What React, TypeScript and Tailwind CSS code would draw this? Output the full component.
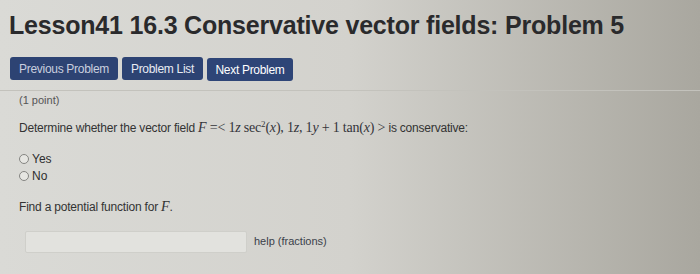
import React from "react";

const sans = { fontFamily: '"Liberation Sans", Arial, sans-serif' };
const serif = { fontFamily: '"Liberation Serif", "Times New Roman", serif' };

function Nav() {
  return (
    <div className="flex gap-[4px] pl-[10px] pt-[18px]">
      <button className="h-[23px] w-[108px] rounded-[3px] bg-[#2d4373] text-[12px] tracking-[-0.3px] text-[#c9cfdf]">
        Previous Problem
      </button>
      <button className="h-[23px] w-[81px] rounded-[3px] bg-[#2d4373] text-[12px] tracking-[-0.3px] text-[#e8ebf2]">
        Problem List
      </button>
      <button className="mt-[1px] h-[23px] w-[86px] rounded-[3px] bg-[#2e4577] text-[12px] tracking-[-0.3px] text-white">
        Next Problem
      </button>
    </div>
  );
}

function Radio({ label }: { label: string }) {
  return (
    <label className="flex items-center gap-[3px] text-[12px] leading-[17px] text-[#2e2e2e]">
      <span className="inline-block h-[10px] w-[10px] rounded-full border border-[#858582] bg-[#e6e6e2]" />
      {label}
    </label>
  );
}

export default function App() {
  return (
    <div
      className="relative h-[274px] w-[700px] overflow-hidden bg-linear-to-r from-[#dadad6] via-[#d3d2cd] to-[#a9a79f]"
      style={sans}
    >
      <h1 className="pl-[9px] pt-[11px] text-[25px] font-bold leading-[28px] tracking-[-0.2px] text-[#2a2a2c]">
        Lesson41 16.3 Conservative vector fields: Problem 5
      </h1>
      <Nav />
      <div className="mt-[9px] h-px w-full bg-[#c3c2bc]" />
      <div className="pl-[19px]">
        <p className="pt-[1px] text-[11px] text-[#555]">(1 point)</p>
        <p className="mt-[8px] flex items-baseline text-[12px] tracking-[-0.2px] text-[#333]">
          Determine whether the vector field&nbsp;
          <span className="text-[14px] text-[#34343a]" style={serif}>
            <i>F</i> =&lt; 1<i>z</i> sec<sup className="text-[9px]">2</sup>(<i>x</i>), 1<i>z</i>, 1<i>y</i> + 1 tan(<i>x</i>) &gt;
          </span>
          &nbsp;is conservative:
        </p>
        <div className="mt-[13px] flex flex-col">
          <Radio label="Yes" />
          <Radio label="No" />
        </div>
        <p className="mt-[11px] text-[12px] tracking-[-0.2px] text-[#333]">
          Find a potential function for{" "}
          <i className="text-[14px]" style={serif}>F</i>.
        </p>
        <div className="mt-[14px] flex items-center gap-[7px] pl-[6px]">
          <div className="h-[22px] w-[222px] rounded-[2px] border border-[#cfcfca] bg-[#e2e2de]" />
          <span className="text-[11px] text-[#3a3f4a]">help (fractions)</span>
        </div>
      </div>
    </div>
  );
}
